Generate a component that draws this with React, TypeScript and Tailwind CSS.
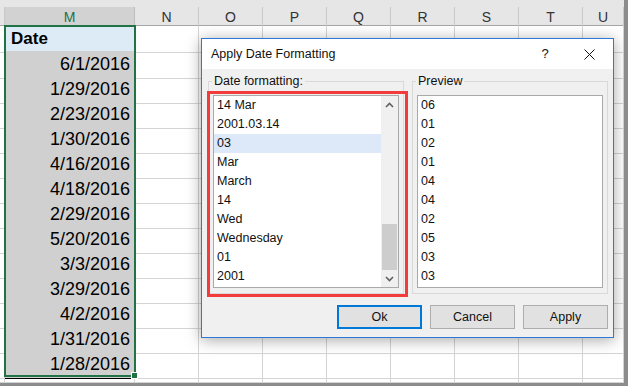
import React from "react";

const COLS = "grid-cols-[5px_130px_64px_64px_64px_64px_64px_64px_64px_1fr]";
const LETTERS = ["", "M", "N", "O", "P", "Q", "R", "S", "T", "U"];
const DATES = [
  "6/1/2016",
  "1/29/2016",
  "2/23/2016",
  "1/30/2016",
  "4/16/2016",
  "4/18/2016",
  "2/29/2016",
  "5/20/2016",
  "3/3/2016",
  "3/29/2016",
  "4/2/2016",
  "1/31/2016",
  "1/28/2016",
];
const FORMATS = ["14 Mar", "2001.03.14", "03", "Mar", "March", "14", "Wed", "Wednesday", "01", "2001"];
const PREVIEW = ["06", "01", "02", "01", "04", "04", "02", "05", "03", "03"];

function HeaderRow() {
  return (
    <div className="h-[26px] bg-[#e6e6e6] flex flex-col">
      <div className="h-[7px]" />
      <div className={`grid ${COLS} h-[19px] border-b border-[#a6a6a6]`}>
        {LETTERS.map((l, i) => (
          <div
            key={i}
            className={
              i === 1
                ? "bg-[#d2d2d2] border-r border-[#bdbdbd] flex items-center justify-center text-[#217346] text-[14px]"
                : "border-r border-[#c8c8c8] flex items-center justify-center text-[#333] text-[14px]"
            }
          >
            {l}
          </div>
        ))}
      </div>
    </div>
  );
}

function SheetRow({ idx }: { idx: number }) {
  const cells = [];
  for (let c = 0; c < 10; c++) {
    if (c === 1) {
      if (idx === 0) {
        cells.push(
          <div key={c} className="bg-[#ddebf7] border-b border-black flex items-center pl-[6px] font-bold text-[17px] text-black">
            Date
          </div>
        );
      } else if (idx <= 13) {
        cells.push(
          <div key={c} className="bg-[#d0d0d0] border-b border-black flex items-center justify-end pr-[5px] text-[18px] text-black">
            {DATES[idx - 1]}
          </div>
        );
      } else {
        cells.push(<div key={c} className="border-r border-b border-[#d4d4d4]" />);
      }
    } else {
      cells.push(<div key={c} className="border-r border-b border-[#d4d4d4]" />);
    }
  }
  return <div className={`grid ${COLS} ${idx === 14 ? "h-[7px]" : "h-[25px]"}`}>{cells}</div>;
}

function ListBox({ items, selected, scroll }: { items: string[]; selected?: number; scroll?: boolean }) {
  return (
    <div className="h-[193px] bg-white border border-[#a9a9a9] flex">
      <div className="flex-1 flex flex-col">
        {items.map((t, i) => (
          <div
            key={i}
            className={`h-[19px] flex items-center pl-[3px] text-[12.5px] text-[#111] ${i === selected ? "bg-[#dde8f9]" : ""}`}
          >
            {t}
          </div>
        ))}
      </div>
      {scroll && (
        <div className="w-[17px] bg-[#f0f0f0] flex flex-col">
          <div className="h-[18px] flex items-center justify-center">
            <svg width="9" height="6" viewBox="0 0 9 6">
              <path d="M1 5 L4.5 1.5 L8 5" fill="none" stroke="#606060" strokeWidth="1.6" />
            </svg>
          </div>
          <div className="flex-1 flex flex-col px-[1px]">
            <div className="h-[111px]" />
            <div className="h-[46px] bg-[#cdcdcd]" />
          </div>
          <div className="h-[18px] flex items-center justify-center">
            <svg width="9" height="6" viewBox="0 0 9 6">
              <path d="M1 1 L4.5 4.5 L8 1" fill="none" stroke="#606060" strokeWidth="1.6" />
            </svg>
          </div>
        </div>
      )}
    </div>
  );
}

function Group({ label, children }: { label: string; children: React.ReactNode }) {
  return (
    <div className="relative w-[196px] h-[213px] border border-[#d9d9d9] pt-[13px] px-[4px]">
      <div className="absolute -top-[9px] left-[3px] px-[2px] bg-[#f0f0f0] text-[12.5px] leading-[16px] text-[#111]">
        {label}
      </div>
      {children}
    </div>
  );
}

function Button({ label, primary }: { label: string; primary?: boolean }) {
  return (
    <div
      className={`h-[24px] w-[85px] flex items-center justify-center bg-[#e1e1e1] text-[12.5px] text-[#111] ${
        primary ? "border-2 border-[#0078d7]" : "border border-[#adadad]"
      }`}
    >
      {label}
    </div>
  );
}

function Dialog() {
  return (
    <div className="absolute left-[201px] top-[38px] w-[413px] h-[300px] border border-[#2c7ad6] bg-[#f0f0f0] shadow-[0_2px_14px_rgba(0,0,0,0.35)] flex flex-col">
      <div className="h-[30px] bg-white flex items-center pl-[9px] pr-[18px] text-[12.5px] text-[#111]">
        <span className="flex-1">Apply Date Formatting</span>
        <span className="w-[14px] text-center mr-[32px] text-[13px]">?</span>
        <svg width="11" height="11" viewBox="0 0 11 11">
          <path d="M0.5 0.5 L10.5 10.5 M10.5 0.5 L0.5 10.5" stroke="#111" strokeWidth="1" />
        </svg>
      </div>
      <div className="relative flex-1 pl-[6px] pr-[5px] flex flex-col">
        <div className="mt-[12px] flex gap-[8px]">
          <Group label="Date formatting:">
            <ListBox items={FORMATS} selected={2} scroll />
          </Group>
          <Group label="Preview">
            <ListBox items={PREVIEW} />
          </Group>
        </div>
        <div className="mt-[11px] flex justify-end gap-[8px]">
          <Button label="Ok" primary />
          <Button label="Cancel" />
          <Button label="Apply" />
        </div>
        <div className="absolute left-[5px] top-[22px] w-[201px] h-[206px] border-[3px] border-[#f23b3b]" />
      </div>
    </div>
  );
}

export default function App() {
  const rows = [];
  for (let i = 0; i < 15; i++) rows.push(<SheetRow key={i} idx={i} />);
  return (
    <div
      className="relative w-[628px] h-[386px] overflow-hidden bg-white border-r-4 border-b-[3px] border-[#8c8c8c]"
      style={{ fontFamily: '"Liberation Sans", Arial, sans-serif' }}
    >
      <HeaderRow />
      {rows}
      <div className="absolute left-[4px] top-[25px] w-[132px] h-[352px] border-2 border-[#217346]" />
      <div className="absolute left-[131px] top-[372px] w-[7px] h-[7px] bg-[#217346] border border-white" />
      <Dialog />
    </div>
  );
}
